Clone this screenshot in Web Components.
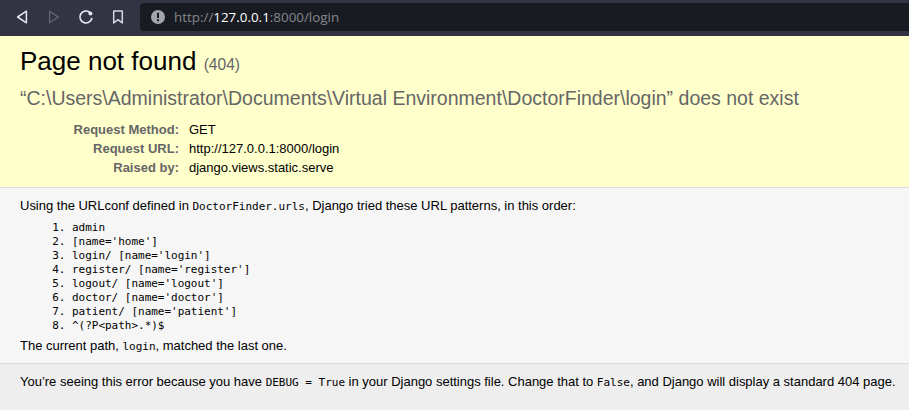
<!DOCTYPE html>
<html lang="en">
<head>
<meta charset="utf-8">
<title>Page not found at /login</title>
<style>
  html, body { margin: 0; padding: 0; }
  body {
    height: 410px;
    display: flex;
    flex-direction: column;
    overflow: hidden;
    background: #eee;
    color: #000;
    font: 13px "Liberation Sans", Arial, sans-serif;
  }
</style>
</head>
<body>
<browser-bar host="127.0.0.1" path=":8000/login"></browser-bar>

<page-section variant="summary">
  <error-title code="(404)">Page not found</error-title>
  <error-reason>“C:\Users\Administrator\Documents\Virtual Environment\DoctorFinder\login” does not exist</error-reason>
  <meta-row label="Request Method:">GET</meta-row>
  <meta-row label="Request URL:">http://127.0.0.1:8000/login</meta-row>
  <meta-row label="Raised by:">django.views.static.serve</meta-row>
</page-section>

<page-section variant="info">
  <text-line>Using the URLconf defined in <inline-code>DoctorFinder.urls</inline-code>, Django tried these URL patterns, in this order:</text-line>
  <url-patterns></url-patterns>
  <text-line>The current path, <inline-code>login</inline-code>, matched the last one.</text-line>
</page-section>

<page-section variant="explanation">
  <text-line>You’re seeing this error because you have <inline-code>DEBUG = True</inline-code> in your Django settings file. Change that to <inline-code>False</inline-code>, and Django will display a standard 404 page.</text-line>
</page-section>

<script>
const PATTERNS = [
  'admin',
  "[name='home']",
  "login/ [name='login']",
  "register/ [name='register']",
  "logout/ [name='logout']",
  "doctor/ [name='doctor']",
  "patient/ [name='patient']",
  '^(?P&lt;path&gt;.*)$'
];

class BaseElement extends HTMLElement {
  constructor () {
    super();
    this.attachShadow({ mode: 'open' });
  }

  connectedCallback () {
    this.shadowRoot.innerHTML = `<style>${this.constructor.styles}</style>${this.template()}`;
  }
}

class BrowserBar extends BaseElement {
  static get styles () {
    return `
      :host {
        display: flex;
        flex: none;
        box-sizing: border-box;
        height: 36px;
        padding: 3px 0 5px;
        background: #323443;
      }

      .nav {
        display: flex;
        align-items: center;
        gap: 12px;
        width: 140px;
        padding-left: 12px;
        box-sizing: border-box;
      }

      svg { display: block; flex: none; }

      .address {
        flex: 1;
        display: flex;
        align-items: center;
        padding-left: 11px;
        border-radius: 4px 0 0 4px;
        background: #191b22;
      }

      .url {
        margin-left: 9px;
        font: 13.4px/20px "Open Sans", "Noto Sans", sans-serif;
        color: #85878b;
        white-space: nowrap;
      }

      .url__host { color: #fff; }
    `;
  }

  template () {
    return `
      <div class="nav">
        <svg width="20" height="20" viewBox="0 0 20 20" fill="none" stroke="#e6e7ee" stroke-width="1.5" stroke-linejoin="round"><path d="M14.4 4.2v11.6L5.6 10z"/></svg>
        <svg width="20" height="20" viewBox="0 0 20 20" fill="none" stroke="#656775" stroke-width="1.3" stroke-linejoin="round"><path d="M5.6 4.2v11.6l8.8-5.8z"/></svg>
        <svg width="20" height="20" viewBox="0 0 20 20" fill="none" stroke="#e6e7ee" stroke-width="1.7" stroke-linecap="round"><path d="M13.6 5.2A6 6 0 1 0 15.8 11.5"/><circle cx="14.4" cy="6.5" r="2" fill="#e6e7ee" stroke="none"/></svg>
        <svg width="20" height="20" viewBox="0 0 20 20" fill="none" stroke="#d5d6df" stroke-width="1.5" stroke-linejoin="round"><path d="M5.7 4h8.6v12L10 12.7 5.7 16z"/></svg>
      </div>
      <div class="address">
        <svg width="14" height="14" viewBox="0 0 14 14"><circle cx="7" cy="7" r="7" fill="#a3a5ac"/><path d="M6 2.7h2v5.2H6zM6 9.3h2v2H6z" fill="#191b22"/></svg>
        <div class="url">http://<span class="url__host">${this.getAttribute('host')}</span>${this.getAttribute('path')}</div>
      </div>`;
  }
}

class PageSection extends BaseElement {
  static get styles () {
    return `
      :host {
        display: block;
        box-sizing: border-box;
        padding: 10px 20px;
        border-bottom: 1px solid #ddd;
      }
      :host([variant="summary"]) { height: 152px; background: #ffc; }
      :host([variant="info"]) { height: 176px; background: #f6f6f6; }
      :host([variant="explanation"]) { flex: 1; border-bottom: 0; background: #eee; }
    `;
  }

  template () {
    return '<slot></slot>';
  }
}

class ErrorTitle extends BaseElement {
  static get styles () {
    return `
      :host { display: block; }
      h1 { margin: 0; font-size: 26px; line-height: 30px; font-weight: normal; }
      span { font-size: 15.6px; color: #666; }
    `;
  }

  template () {
    return `<h1><slot></slot> <span>${this.getAttribute('code')}</span></h1>`;
  }
}

class ErrorReason extends BaseElement {
  static get styles () {
    return `
      :host {
        display: block;
        margin: 6px 0 10px;
        font-size: 19.5px;
        line-height: 24px;
        color: #666;
        white-space: nowrap;
      }
    `;
  }

  template () {
    return '<slot></slot>';
  }
}

class MetaRow extends BaseElement {
  static get styles () {
    return `
      :host { display: flex; line-height: 15px; padding: 2px 0; }
      .label {
        width: 159px;
        margin-right: 10px;
        text-align: right;
        font-weight: bold;
        color: #666;
      }
    `;
  }

  template () {
    return `<div class="label">${this.getAttribute('label')}</div><div><slot></slot></div>`;
  }
}

class TextLine extends BaseElement {
  static get styles () {
    return ':host { display: block; line-height: 15px; letter-spacing: -0.008px; white-space: nowrap; }';
  }

  template () {
    return '<slot></slot>';
  }
}

class InlineCode extends BaseElement {
  static get styles () {
    return ':host { display: inline; font: 11px/1 "DejaVu Sans Mono", monospace; }';
  }

  template () {
    return '<slot></slot>';
  }
}

class UrlPatterns extends BaseElement {
  static get styles () {
    return `
      :host { display: block; }
      ol {
        margin: 8px 0 5px 52px;
        padding: 0;
        font: 11px/14px "DejaVu Sans Mono", monospace;
        letter-spacing: -0.02px;
      }
    `;
  }

  template () {
    return `<ol>${PATTERNS.map(pattern => `<li>${pattern}</li>`).join('')}</ol>`;
  }
}

customElements.define('browser-bar', BrowserBar);
customElements.define('page-section', PageSection);
customElements.define('error-title', ErrorTitle);
customElements.define('error-reason', ErrorReason);
customElements.define('meta-row', MetaRow);
customElements.define('text-line', TextLine);
customElements.define('inline-code', InlineCode);
customElements.define('url-patterns', UrlPatterns);
</script>
</body>
</html>
